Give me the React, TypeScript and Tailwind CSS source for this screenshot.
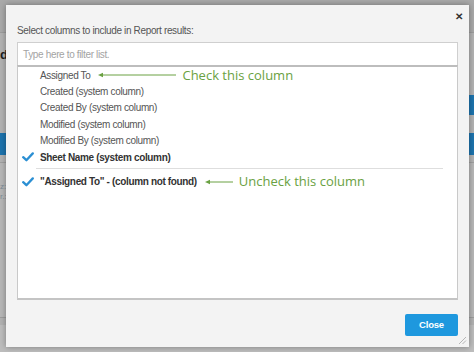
import React from 'react';

const items = [
    { label: 'Assigned To', checked: false, note: 'Check this column' },
    { label: 'Created (system column)', checked: false },
    { label: 'Created By (system column)', checked: false },
    { label: 'Modified (system column)', checked: false },
    { label: 'Modified By (system column)', checked: false },
    { label: 'Sheet Name (system column)', checked: true },
];

const Check: React.FC = () => (
    <svg width="12" height="10" viewBox="0 0 12 10">
        <path d="M1.2 5.2 L4.4 8.2 L10.8 1.4" fill="none" stroke="#2b8fd3" strokeWidth="2.3" strokeLinecap="round" strokeLinejoin="round" />
    </svg>
);

const Arrow: React.FC<{ width: number }> = ({ width }) => (
    <svg width={width} height="6" viewBox={`0 0 ${width} 6`} className="shrink-0">
        <path d="M0 3 L5 0.8 L5 5.2 Z" fill="#6aa142" />
        <line x1="4" y1="3" x2={width} y2="3" stroke="#6aa142" strokeWidth="1" />
    </svg>
);

const Note: React.FC<{ text: string; arrow: number }> = ({ text, arrow }) => (
    <div className="flex items-center ml-[8px]">
        <Arrow width={arrow} />
        <span className="ml-[6px] text-[13px] leading-none text-[#6aa142] font-['Open_Sans',sans-serif] tracking-normal">{text}</span>
    </div>
);

export default function App() {
    return (
        <div className="relative w-[474px] h-[352px] overflow-hidden bg-[#b3b3b3] font-['Liberation_Sans',Arial,sans-serif]">
            {/* page behind the overlay */}
            <div className="flex flex-col">
                <div className="h-[33px] bg-[#a9a9a9] border-b border-[#9c9c9c]" />
                <div className="h-[62px] flex items-start">
                    <span className="mt-[15px] ml-0 text-[13px] font-bold text-[#1e1e1e] leading-none">d</span>
                </div>
                <div className="h-[20px] flex justify-end">
                    <div className="w-[8px] bg-[#1d73ad]" />
                </div>
                <div className="h-[18px]" />
                <div className="h-[22px] flex justify-between">
                    <div className="w-[8px] bg-[#1d73ad]" />
                    <div className="w-[8px] bg-[#1d73ad]" />
                </div>
                <div className="h-[8px] border-b border-[#9f9f9f]" />
                <div className="h-[154px] bg-[#b7b7b7] flex flex-col justify-start">
                    <span className="mt-[20px] text-[8px] text-[#7c8a94] leading-none">z:</span>
                    <span className="mt-[2px] text-[8px] text-[#7c8a94] leading-none">r.:</span>
                </div>
                <div className="h-[8px] border-t border-[#9c9c9c] bg-[#b2b2b2]" />
                <div className="h-[30px] bg-[#bdbdbd]" />
            </div>

            {/* dialog */}
            <div className="absolute left-[6px] top-[5px] w-[463px] h-[342px] bg-[#f3f3f3] shadow-[0_0_6px_rgba(0,0,0,0.35)] flex flex-col px-[11px] tracking-[-0.35px]">
                <button className="absolute right-[6px] top-[7px] text-[#333] text-[10px] font-bold leading-none tracking-normal">✕</button>
                <div className="mt-[19px] h-[12px] flex items-center text-[10px] text-[#555]">
                    Select columns to include in Report results:
                </div>
                <div className="mt-[6px] h-[23px] bg-white border border-[#cfcfcf] border-b-0 flex items-center pl-[5px] text-[10px] text-[#a3a3a3]">
                    Type here to filter list.
                </div>
                <div className="h-[235px] bg-white border border-[#c9c9c9] border-t-2 border-t-[#bdbdbd] border-b-2 border-b-[#c4c4c4] flex flex-col">
                    {items.map((item, i) => (
                        <div key={i} className="h-[16.4px] flex items-center">
                            <div className="w-[22px] pl-[4px] flex items-center">{item.checked && <Check />}</div>
                            <span className={item.checked ? 'text-[10px] font-bold text-[#333]' : 'text-[10px] text-[#555]'}>{item.label}</span>
                            {item.note && <Note text={item.note} arrow={78} />}
                        </div>
                    ))}
                    <div className="mt-[3px] ml-[18px] mr-[14px] border-t border-[#dedede]" />
                    <div className="mt-[4px] h-[16.4px] flex items-center">
                        <div className="w-[22px] pl-[4px] flex items-center"><Check /></div>
                        <span className="text-[10px] font-bold text-[#333]">"Assigned To" - (column not found)</span>
                        <Note text="Uncheck this column" arrow={28} />
                    </div>
                </div>
                <div className="mt-[14px] flex justify-end">
                    <button className="w-[53px] h-[22px] rounded-[2px] bg-[#1e98de] text-white text-[9.5px] font-bold tracking-[-0.2px]">Close</button>
                </div>
                <svg width="9" height="9" viewBox="0 0 9 9" className="absolute right-[2px] bottom-[2px]">
                    <line x1="1" y1="8" x2="8" y2="1" stroke="#b5b5b5" strokeWidth="1" />
                    <line x1="4.5" y1="8" x2="8" y2="4.5" stroke="#b5b5b5" strokeWidth="1" />
                </svg>
            </div>
        </div>
    );
}
